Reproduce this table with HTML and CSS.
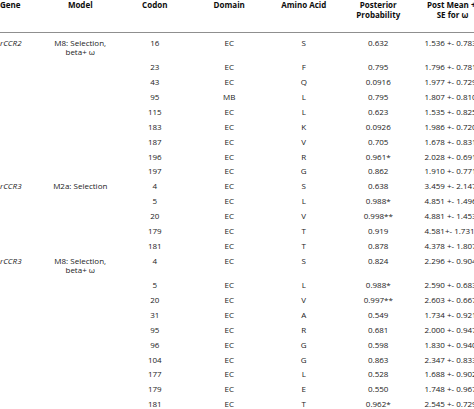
FILE: index.html
```html
<!DOCTYPE html>
<html lang="en">
<head>
<meta charset="utf-8">
<title>Sites under positive selection</title>
<link rel="stylesheet" href="styles.css">
</head>
<body>
<table class="sel">
  <colgroup>
    <col class="c-gene"><col class="c-std"><col class="c-std"><col class="c-std"><col class="c-std"><col class="c-std"><col class="c-last">
  </colgroup>
  <thead>
    <tr>
      <th class="gene">Gene</th>
      <th>Model</th>
      <th>Codon</th>
      <th>Domain</th>
      <th>Amino Acid</th>
      <th>Posterior<br>Probability</th>
      <th>Post Mean +-<br>SE for ω</th>
    </tr>
  </thead>
  <tbody>
    <tr class="first"><td class="gene">rCCR2</td><td>M8: Selection,<br>beta+ ω</td><td>16</td><td>EC</td><td>S</td><td>0.632</td><td>1.536 +- 0.783</td></tr>
    <tr><td></td><td></td><td>23</td><td>EC</td><td>F</td><td>0.795</td><td>1.796 +- 0.781</td></tr>
    <tr><td></td><td></td><td>43</td><td>EC</td><td>Q</td><td>0.0916</td><td>1.977 +- 0.729</td></tr>
    <tr><td></td><td></td><td>95</td><td>MB</td><td>L</td><td>0.795</td><td>1.807 +- 0.810</td></tr>
    <tr><td></td><td></td><td>115</td><td>EC</td><td>L</td><td>0.623</td><td>1.535 +- 0.825</td></tr>
    <tr><td></td><td></td><td>183</td><td>EC</td><td>K</td><td>0.0926</td><td>1.986 +- 0.720</td></tr>
    <tr><td></td><td></td><td>187</td><td>EC</td><td>V</td><td>0.705</td><td>1.678 +- 0.831</td></tr>
    <tr><td></td><td></td><td>196</td><td>EC</td><td>R</td><td>0.961*</td><td>2.028 +- 0.691</td></tr>
    <tr><td></td><td></td><td>197</td><td>EC</td><td>G</td><td>0.862</td><td>1.910 +- 0.771</td></tr>
    <tr><td class="gene">rCCR3</td><td>M2a: Selection</td><td>4</td><td>EC</td><td>S</td><td>0.638</td><td>3.459 +- 2.147</td></tr>
    <tr><td></td><td></td><td>5</td><td>EC</td><td>L</td><td>0.988*</td><td>4.851 +- 1.496</td></tr>
    <tr><td></td><td></td><td>20</td><td>EC</td><td>V</td><td>0.998**</td><td>4.881 +- 1.453</td></tr>
    <tr><td></td><td></td><td>179</td><td>EC</td><td>T</td><td>0.919</td><td>4.581+- 1.731</td></tr>
    <tr><td></td><td></td><td>181</td><td>EC</td><td>T</td><td>0.878</td><td>4.378 +- 1.807</td></tr>
    <tr><td class="gene">rCCR3</td><td>M8: Selection,<br>beta+ ω</td><td>4</td><td>EC</td><td>S</td><td>0.824</td><td>2.296 +- 0.904</td></tr>
    <tr><td></td><td></td><td>5</td><td>EC</td><td>L</td><td>0.988*</td><td>2.590 +- 0.683</td></tr>
    <tr><td></td><td></td><td>20</td><td>EC</td><td>V</td><td>0.997**</td><td>2.603 +- 0.667</td></tr>
    <tr><td></td><td></td><td>31</td><td>EC</td><td>A</td><td>0.549</td><td>1.734 +- 0.921</td></tr>
    <tr><td></td><td></td><td>95</td><td>EC</td><td>R</td><td>0.681</td><td>2.000 +- 0.947</td></tr>
    <tr><td></td><td></td><td>96</td><td>EC</td><td>G</td><td>0.598</td><td>1.830 +- 0.940</td></tr>
    <tr><td></td><td></td><td>104</td><td>EC</td><td>G</td><td>0.863</td><td>2.347 +- 0.833</td></tr>
    <tr><td></td><td></td><td>177</td><td>EC</td><td>L</td><td>0.528</td><td>1.688 +- 0.902</td></tr>
    <tr><td></td><td></td><td>179</td><td>EC</td><td>E</td><td>0.550</td><td>1.748 +- 0.967</td></tr>
    <tr><td></td><td></td><td>181</td><td>EC</td><td>T</td><td>0.962*</td><td>2.545 +- 0.729</td></tr>
  </tbody>
</table>
</body>
</html>
```

FILE: styles.css
```css
html, body {
  margin: 0;
  padding: 0;
  background: #ffffff;
}
body {
  width: 474px;
  height: 409px;
  overflow: hidden;
  font-family: "Open Sans", "Noto Sans", sans-serif;
  font-size: 8px;
  color: #222222;
}
.sel {
  border-collapse: collapse;
  table-layout: fixed;
  width: 489.5px;
}
.c-gene { width: 43px; }
.c-std { width: 74.5px; }
.c-last { width: 74px; }
.sel th {
  font-weight: 700;
  color: #0d0d0d;
  line-height: 10px;
  padding: 0 0 12px 0;
  vertical-align: top;
  text-align: center;
  border-bottom: 1px solid #8f8f8f;
  white-space: nowrap;
}
.sel td {
  line-height: 9.6px;
  padding: 2.65px 0;
  vertical-align: top;
  text-align: center;
  white-space: nowrap;
}
.sel tr.first td {
  padding-top: 4.9px;
}
.sel th.gene,
.sel td.gene {
  text-align: left;
}
.sel td.gene {
  font-style: italic;
}
.sel td:last-child {
  text-align: left;
  padding-left: 9px;
}
```
